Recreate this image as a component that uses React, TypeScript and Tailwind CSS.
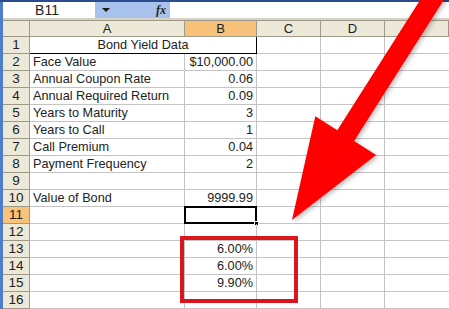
import React from 'react';

const cols = 'grid grid-cols-[27px_155px_72px_64px_64px_1fr]';

const rows: { a?: string; b?: string }[] = [
  {},
  { a: 'Face Value', b: '$10,000.00' },
  { a: 'Annual Coupon Rate', b: '0.06' },
  { a: 'Annual Required Return', b: '0.09' },
  { a: 'Years to Maturity', b: '3' },
  { a: 'Years to Call', b: '1' },
  { a: 'Call Premium', b: '0.04' },
  { a: 'Payment Frequency', b: '2' },
  {},
  { a: 'Value of Bond', b: '9999.99' },
  {},
  {},
  { b: '6.00%' },
  { b: '6.00%' },
  { b: '9.90%' },
  {},
];

function HeaderCell({ label, active }: { label: string; active?: boolean }) {
  return (
    <div
      className={`flex items-center justify-center border-r border-b border-[#9d9a8a] ${
        active ? 'bg-[#f8c27a]' : 'bg-[#ece9d8]'
      }`}
    >
      {label}
    </div>
  );
}

export default function App() {
  return (
    <div
      className="relative w-[449px] h-[309px] overflow-hidden bg-white text-[#222] text-[12.7px] leading-none"
      style={{ fontFamily: '"Liberation Sans", Arial, sans-serif' }}
    >
      <div className="h-[2px] bg-[#2c4b8e]" />
      <div className="flex">
        <div className="w-[3px] h-[307px] bg-[#4d7cc9]" />
        <div className="flex-1 flex flex-col">
          {/* Name box / formula bar */}
          <div className="flex h-[16px] text-[14px]">
            <div className="w-[92px] flex items-center justify-center pr-[4px] bg-white">B11</div>
            <div className="w-[75px] flex items-center justify-between pl-[7px] pr-[4px] bg-[#a8c2ee]">
              <span className="w-0 h-0 border-l-[4px] border-r-[4px] border-t-[4px] border-l-transparent border-r-transparent border-t-[#1a1a1a]" />
              <span className="italic font-bold text-[12px]" style={{ fontFamily: '"Liberation Serif", serif' }}>
                fx
              </span>
            </div>
            <div className="flex-1 bg-white" />
          </div>
          <div className="h-[2px] bg-[#d6d3c6]" />

          {/* Column headers */}
          <div className={`${cols} h-[17px] border-t border-[#9d9a8a] text-[13px]`}>
            <HeaderCell label="" />
            <HeaderCell label="A" />
            <HeaderCell label="B" active />
            <HeaderCell label="C" />
            <HeaderCell label="D" />
            <HeaderCell label="" />
          </div>

          {/* Rows */}
          {rows.map((r, i) => {
            const n = i + 1;
            return (
              <div key={n} className={`${cols} h-[17px]`}>
                <div
                  className={`flex items-center justify-center border-r border-b border-[#9d9a8a] text-[13.5px] ${
                    n === 11 ? 'bg-[#f8c27a]' : 'bg-[#ece9d8]'
                  }`}
                >
                  {n}
                </div>
                {n === 1 ? (
                  <div className="col-span-2 flex items-center justify-center border-r border-b border-black">
                    Bond Yield Data
                  </div>
                ) : (
                  <>
                    <div className="flex items-center pl-[3px] border-r border-b border-[#c4c4c4] whitespace-nowrap">
                      {r.a}
                    </div>
                    <div className="relative flex items-center justify-end pr-[3px] border-r border-b border-[#c4c4c4]">
                      {r.b}
                      {n === 11 && (
                        <>
                          <div className="absolute -left-[1px] -top-[1px] -right-[1px] -bottom-[1px] border-2 border-black" />
                          <div className="absolute -right-[3px] -bottom-[3px] w-[5px] h-[5px] bg-black border border-white" />
                        </>
                      )}
                    </div>
                  </>
                )}
                <div className="border-r border-b border-[#c4c4c4]" />
                <div className="border-r border-b border-[#c4c4c4]" />
                <div className="border-b border-[#c4c4c4]" />
              </div>
            );
          })}
        </div>
      </div>

      {/* Red highlight box */}
      <div className="absolute left-[180px] top-[236px] w-[118px] h-[67px] border-4 border-[#d9161c]" />

      {/* Red arrow */}
      <svg className="absolute inset-0" width="449" height="309" viewBox="0 0 449 309">
        <defs>
          <filter id="sh" x="-20%" y="-20%" width="140%" height="140%">
            <feDropShadow dx="2" dy="2" stdDeviation="2" floodColor="#000" floodOpacity="0.25" />
          </filter>
        </defs>
        <polygon
          filter="url(#sh)"
          fill="#ff0000"
          points="434.3,-22.3 337.3,130.2 315.3,116.3 292,220 376.1,154.9 354.1,141 451.1,-11.5"
        />
      </svg>
    </div>
  );
}
